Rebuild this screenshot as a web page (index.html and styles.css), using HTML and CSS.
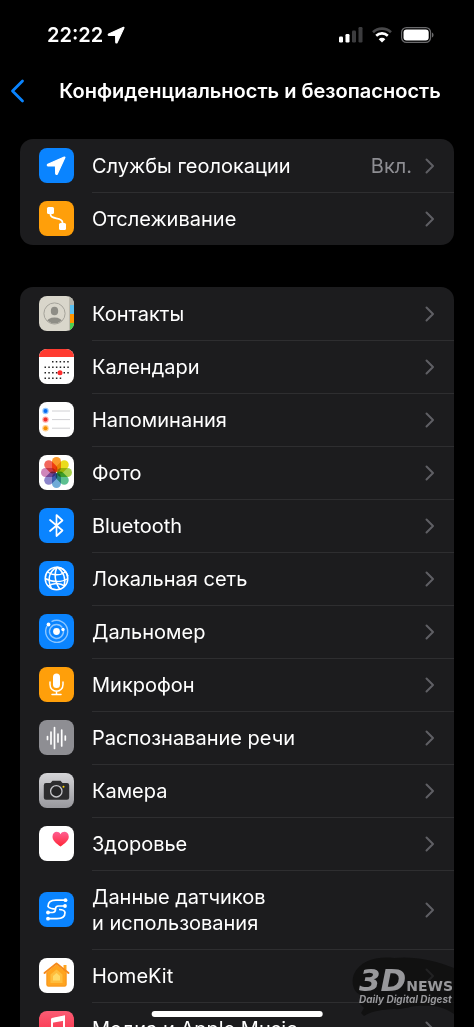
FILE: index.html
```
<!DOCTYPE html>
<html lang="ru">
<head>
  <meta charset="UTF-8" />
  <meta name="viewport" content="width=device-width, initial-scale=1.0" />
  <title>Конфиденциальность и безопасность</title>
  <link rel="stylesheet" href="styles.css">
</head>
<body>
  <svg class="sprite" aria-hidden="true">
    <symbol id="chevron" viewBox="0 0 10 16">
      <path d="M1.500 1.500 8 8l-6.500 6.500" fill="none" stroke="currentColor" stroke-width="2" stroke-linecap="round" stroke-linejoin="round"/>
    </symbol>
    <symbol id="arrow" viewBox="0 0 20 20">
      <path d="M18.300 1.500 1.800 8.800c-.8.500-.6 1.700.4 1.700h7.300l.2 7.600c0 1 1.200 1.200 1.600.3L18.900 2.100c.1-.4-.2-.7-.6-.6z" fill="#fff" stroke="#fff" stroke-width="1.200" stroke-linejoin="round"/>
    </symbol>
  </svg>

  <header class="status-bar">
    <div class="status-left">
      <span>22:22</span>
      <svg class="status-arrow"><use href="#arrow"/></svg>
    </div>
    <div class="status-right">
      <svg width="24" height="16" viewBox="0 0 24 16">
        <rect x="0" y="9.500" width="4" height="6" rx="1.200" fill="#fff"/>
        <rect x="6.500" y="7" width="4" height="8.500" rx="1.200" fill="#fff"/>
        <rect x="13" y="3.500" width="4" height="12" rx="1.200" fill="#3c3c3e"/>
        <rect x="19.500" y="0" width="4" height="15.500" rx="1.200" fill="#3c3c3e"/>
      </svg>
      <svg width="20" height="16" viewBox="0 0 20 16" fill="none" stroke-width="2.600">
        <path d="M1 5.200a13 13 0 0 1 18 0" stroke="#48484a"/>
        <path d="M4.200 8.700a8.400 8.400 0 0 1 11.600 0" stroke="#fff"/>
        <path d="M10 15.500 6.700 12.200a4.700 4.700 0 0 1 6.600 0z" fill="#fff"/>
      </svg>
      <svg width="33" height="16" viewBox="0 0 33 16">
        <rect x=".6" y=".6" width="29" height="14.800" rx="4.800" fill="none" stroke="#6a6a6c" stroke-width="1.200"/>
        <rect x="2.500" y="2.500" width="25.200" height="11" rx="3" fill="#fff"/>
        <path d="M31 5.500c2 .8 2 4.200 0 5z" fill="#6a6a6c"/>
      </svg>
    </div>
  </header>

  <nav class="nav-bar">
    <button class="back-btn" type="button" aria-label="Назад">
      <svg width="15" height="24" viewBox="0 0 15 24"><path d="M12.500 2 2.500 12l10 10" fill="none" stroke="#0a84ff" stroke-width="2.800" stroke-linecap="round" stroke-linejoin="round"/></svg>
    </button>
    <h1>Конфиденциальность и безопасность</h1>
  </nav>

  <main>
    <section class="group">
      <a class="row" href="#location">
        <span class="icon blue"><svg viewBox="0 0 35 35"><use href="#arrow" x="7" y="7.500" width="20" height="20"/></svg></span>
        <span class="row-body"><span class="label">Службы геолокации</span><span class="value">Вкл.</span><svg class="chevron"><use href="#chevron"/></svg></span>
      </a>
      <a class="row" href="#tracking">
        <span class="icon orange">
          <svg viewBox="0 0 35 35">
            <rect x="8" y="6" width="7" height="7" rx="1.500" fill="#fff"/>
            <rect x="20" y="22" width="7" height="7" rx="1.500" fill="#fff"/>
            <path d="M11.500 12v1.500c0 5.500 12 2 12 8V23" fill="none" stroke="#fff" stroke-width="1.800"/>
          </svg>
        </span>
        <span class="row-body"><span class="label">Отслеживание</span><svg class="chevron"><use href="#chevron"/></svg></span>
      </a>
    </section>

    <section class="group">
      <a class="row" href="#contacts">
        <span class="icon contacts">
          <svg viewBox="0 0 35 35">
            <path d="M31 0h4v9h-4z" fill="#b5b4ab"/>
            <path d="M31 9h4v9h-4z" fill="#5ac0f2"/>
            <path d="M31 18h4v9h-4z" fill="#ff9500"/>
            <path d="M31 27h4v8h-4z" fill="#4cd04f"/>
            <path d="M30.500 0v35" stroke="#bcb9ae"/>
            <clipPath id="person"><circle cx="15.500" cy="17.500" r="10"/></clipPath>
            <circle cx="15.500" cy="17.500" r="10.600" fill="none" stroke="#a5a39b"/>
            <g clip-path="url(#person)" fill="#8e8d86"><ellipse cx="15.500" cy="15" rx="3.700" ry="4.300"/><ellipse cx="15.500" cy="26.500" rx="8" ry="5"/></g>
          </svg>
        </span>
        <span class="row-body"><span class="label">Контакты</span><svg class="chevron"><use href="#chevron"/></svg></span>
      </a>
      <a class="row" href="#calendars">
        <span class="icon white">
          <svg viewBox="0 0 35 35">
            <path d="M0 0h35v8H0z" fill="#ff3b30"/>
            <g stroke="#222" stroke-width="1.600" stroke-dasharray="1.500 2.300">
              <path d="M13 12.700h17"/><path d="M5.500 18.300h24.500"/><path d="M5.500 23.700h24.500"/><path d="M5.500 29.300h17"/>
            </g>
            <circle cx="21" cy="23.700" r="2.500" fill="#ff2d2d"/>
          </svg>
        </span>
        <span class="row-body"><span class="label">Календари</span><svg class="chevron"><use href="#chevron"/></svg></span>
      </a>
      <a class="row" href="#reminders">
        <span class="icon white">
          <svg viewBox="0 0 35 35">
            <path d="M13 9h18M13 17.600h18M13 26.200h18" stroke="#d0d0d3"/>
            <g fill-opacity=".45"><circle cx="6.500" cy="9" r="3.200" fill="#0a84ff"/><circle cx="6.500" cy="17.600" r="3.200" fill="#ff3b30"/><circle cx="6.500" cy="26.200" r="3.200" fill="#ff9500"/></g>
            <circle cx="6.500" cy="9" r="2" fill="#0a6cf0"/><circle cx="6.500" cy="17.600" r="2" fill="#f0302a"/><circle cx="6.500" cy="26.200" r="2" fill="#f59000"/>
          </svg>
        </span>
        <span class="row-body"><span class="label">Напоминания</span><svg class="chevron"><use href="#chevron"/></svg></span>
      </a>
      <a class="row" href="#photos">
        <span class="icon white">
          <svg viewBox="0 0 35 35">
            <g class="petals">
              <rect x="13" y="2" width="9" height="15" rx="4.500" fill="#fb9a2c"/>
              <rect x="13" y="2" width="9" height="15" rx="4.500" fill="#ebdc1c" transform="rotate(45 17.500 17.500)"/>
              <rect x="13" y="2" width="9" height="15" rx="4.500" fill="#a8d04e" transform="rotate(90 17.500 17.500)"/>
              <rect x="13" y="2" width="9" height="15" rx="4.500" fill="#5cc090" transform="rotate(135 17.500 17.500)"/>
              <rect x="13" y="2" width="9" height="15" rx="4.500" fill="#70acd8" transform="rotate(180 17.500 17.500)"/>
              <rect x="13" y="2" width="9" height="15" rx="4.500" fill="#8c86cb" transform="rotate(225 17.500 17.500)"/>
              <rect x="13" y="2" width="9" height="15" rx="4.500" fill="#cf86ba" transform="rotate(270 17.500 17.500)"/>
              <rect x="13" y="2" width="9" height="15" rx="4.500" fill="#f2665c" transform="rotate(315 17.500 17.500)"/>
            </g>
          </svg>
        </span>
        <span class="row-body"><span class="label">Фото</span><svg class="chevron"><use href="#chevron"/></svg></span>
      </a>
      <a class="row" href="#bluetooth">
        <span class="icon blue">
          <svg viewBox="0 0 35 35"><path d="m11 12 12.500 10.500-6 5.500V7l6 5.500L11 23" fill="none" stroke="#fff" stroke-width="1.700" stroke-linejoin="round" stroke-linecap="round"/></svg>
        </span>
        <span class="row-body"><span class="label">Bluetooth</span><svg class="chevron"><use href="#chevron"/></svg></span>
      </a>
      <a class="row" href="#network">
        <span class="icon blue">
          <svg viewBox="0 0 35 35" fill="none" stroke="#fff" stroke-width="1.500">
            <circle cx="17.500" cy="17.500" r="11.300"/>
            <path d="M18 6.200C10 10 8 19 12.500 27.500M18 6.200c-3 6-2.500 15 3 22M18 6.200c6 4 9 11 7 19.500M18 6.200c5 0 9 4 11 9"/>
            <path d="M8.500 11c5 3.500 12 4 18 0M6.200 17.500c7 4 17 4 22.600 0M9 25.200c5-3.700 12-3.700 17 0"/>
          </svg>
        </span>
        <span class="row-body"><span class="label">Локальная сеть</span><svg class="chevron"><use href="#chevron"/></svg></span>
      </a>
      <a class="row" href="#nearby">
        <span class="icon blue">
          <svg viewBox="0 0 35 35">
            <g fill="none" stroke="#8cc6ff" stroke-width="1.400">
              <path d="M12.500 7.700a11 11 0 1 1-4.500 4.500"/>
              <path d="M23.300 13.500a7 7 0 1 0 1.100 2.700"/>
            </g>
            <circle cx="17.500" cy="17.500" r="3.400" fill="#fff"/>
            <circle cx="9.500" cy="10.500" r="1.900" fill="#fff"/>
            <circle cx="24" cy="15.500" r="1.700" fill="#fff"/>
          </svg>
        </span>
        <span class="row-body"><span class="label">Дальномер</span><svg class="chevron"><use href="#chevron"/></svg></span>
      </a>
      <a class="row" href="#microphone">
        <span class="icon orange">
          <svg viewBox="0 0 35 35">
            <rect x="14" y="6.500" width="7" height="14.500" rx="3.500" fill="#fff"/>
            <path d="M11 15v2.500c0 9 13 9 13 0V15M17.500 24v3.500M13 27.500h9" fill="none" stroke="#fff" stroke-width="1.500" stroke-linecap="round"/>
          </svg>
        </span>
        <span class="row-body"><span class="label">Микрофон</span><svg class="chevron"><use href="#chevron"/></svg></span>
      </a>
      <a class="row" href="#speech">
        <span class="icon gray">
          <svg viewBox="0 0 35 35"><path d="M8.500 16.500v3M12 12v12M15.500 7.500v21M19 14v8M22.700 10v16M26.300 16v4" fill="none" stroke="#fff" stroke-width="1.700" stroke-linecap="round"/></svg>
        </span>
        <span class="row-body"><span class="label">Распознавание речи</span><svg class="chevron"><use href="#chevron"/></svg></span>
      </a>
      <a class="row" href="#camera">
        <span class="icon camera">
          <svg viewBox="0 0 35 35">
            <path d="M7 10h4.500l2-2.300h8l2 2.300H28a2.200 2.200 0 0 1 2.200 2.200v12.300a2.200 2.200 0 0 1-2.200 2.200H7a2.200 2.200 0 0 1-2.200-2.200V12.200A2.200 2.200 0 0 1 7 10z" fill="#2c2c2e"/>
            <circle cx="17.300" cy="18.300" r="5.700" fill="#242426" stroke="#c4c4c8" stroke-width="1.300"/>
            <circle cx="24.500" cy="13.700" r="1" fill="#ffd60a"/>
          </svg>
        </span>
        <span class="row-body"><span class="label">Камера</span><svg class="chevron"><use href="#chevron"/></svg></span>
      </a>
      <a class="row" href="#health">
        <span class="icon white">
          <svg viewBox="0 0 35 35">
            <linearGradient id="heart" x2="0" y2="1"><stop stop-color="#ff5f93"/><stop offset="1" stop-color="#ff2636"/></linearGradient>
            <path d="M21.500 20.500c-4-3-8-5.800-8-9.800 0-5.500 6-6.500 8-2.500 2-4 8.300-3 8.300 2.500 0 4-4.300 6.800-8.300 9.800z" fill="url(#heart)"/>
          </svg>
        </span>
        <span class="row-body"><span class="label">Здоровье</span><svg class="chevron"><use href="#chevron"/></svg></span>
      </a>
      <a class="row" href="#sensors">
        <span class="icon blue">
          <svg viewBox="0 0 35 35">
            <g fill="none" stroke="#fff" stroke-width="1.700">
              <path d="M26.500 8.200H17c-5 0-8 1.800-8 6.300 2 2.500 4.500 2.500 8 2.500"/>
              <path d="M26 14h-6.500c-2.500 0-3 1-3 3s-1 3.500-3 3.500H9"/>
              <path d="M9 26.700h9c5 0 8-2 8-6.200-.5-2.500-3-3-6-3"/>
            </g>
            <g fill="#fff"><circle cx="26.500" cy="8.200" r="1.900"/><circle cx="26" cy="14" r="1.900"/><circle cx="9" cy="20.500" r="1.900"/><circle cx="9" cy="26.700" r="1.900"/></g>
          </svg>
        </span>
        <span class="row-body"><span class="label">Данные датчиков<br>и использования</span><svg class="chevron"><use href="#chevron"/></svg></span>
      </a>
      <a class="row" href="#homekit">
        <span class="icon white">
          <svg viewBox="0 0 35 35">
            <path d="M17.500 6.500 7.500 14.500v12.500q0 1.500 1.500 1.500h17q1.500 0 1.500-1.500V7h-3v5z" fill="#ffa51f"/>
            <path d="m5.500 15 12-9.500 12 9.500" fill="none" stroke="#f58a1c" stroke-width="2" stroke-linejoin="round" stroke-linecap="round"/>
            <path d="M8 15v11.500q0 1.500 1.500 1.500h16q1.500 0 1.500-1.500V15" fill="none" stroke="#f7941f"/>
            <path d="m17.500 11.500-6 5v8.500h12v-8.500z" fill="#ffbd3c"/>
            <path d="m17.500 15-3.500 3v4.500h7V18z" fill="#ffda68"/>
          </svg>
        </span>
        <span class="row-body"><span class="label">HomeKit</span><svg class="chevron"><use href="#chevron"/></svg></span>
      </a>
      <a class="row" href="#media">
        <span class="icon music">
          <svg viewBox="0 0 35 35">
            <path d="M13 8 25 5.500V23M13 8v17" fill="none" stroke="#fff" stroke-width="2"/>
            <path d="M12 7.500 26 5v4.500L12 12z" fill="#fff"/>
            <ellipse cx="10.500" cy="26" rx="3.500" ry="2.800" fill="#fff"/><ellipse cx="22.500" cy="23.500" rx="3.500" ry="2.800" fill="#fff"/>
          </svg>
        </span>
        <span class="row-body"><span class="label">Медиа и Apple Music</span><svg class="chevron"><use href="#chevron"/></svg></span>
      </a>
    </section>
  </main>

  <div class="watermark">
    <svg class="brush" viewBox="0 0 102 66" preserveAspectRatio="none">
      <path d="M2 21C8 8 24 3 42 5c19-2 40 2 60 10v46C92 54 82 52 71 53c-11-1-18 4-29 3-12 1-20 1-30 7l-3-3 3-5-4-4 3-8C3 41-2 32 2 21z" fill="#0d0d0e" fill-opacity=".75"/>
    </svg>
    <div class="brand"><span class="brand-3d">3D</span><span class="brand-news">NEWS</span></div>
    <div class="tagline">Daily Digital Digest</div>
  </div>
  <div class="home-indicator"></div>
</body>
</html>
```
FILE: styles.css
```
* {
  margin: 0;
  padding: 0;
  box-sizing: border-box;
}

body {
  height: 100vh;
  overflow: hidden;
  background: #000;
  color: #fff;
  font-family: 'Inter', 'Roboto', 'Liberation Sans', sans-serif;
  font-size: 20px;
}

svg {
  display: block;
  flex-shrink: 0;
}

.sprite {
  position: absolute;
  width: 0;
  height: 0;
}

.status-bar {
  display: flex;
  justify-content: space-between;
  align-items: center;
  height: 70px;
  padding: 0 40px 0 47px;
}

.status-left {
  display: flex;
  align-items: center;
  gap: 4px;
  font-size: 20px;
  font-weight: 600;
}

.status-arrow {
  width: 18px;
  height: 18px;
}

.status-right {
  display: flex;
  align-items: center;
  gap: 9px;
}

.nav-bar {
  display: flex;
  align-items: center;
  height: 42px;
  padding: 0 28px 0 10px;
}

.back-btn {
  width: 44px;
  height: 42px;
  display: flex;
  align-items: center;
  background: none;
  border: none;
  cursor: pointer;
}

h1 {
  flex: 1;
  text-align: center;
  white-space: nowrap;
  font-size: 20px;
  font-weight: 600;
}

main {
  display: flex;
  flex-direction: column;
  gap: 42px;
  padding: 27px 20px 0;
}

.group {
  background: #1c1c1e;
  border-radius: 13px;
  overflow: hidden;
}

.row {
  display: flex;
  align-items: center;
  gap: 18px;
  padding-left: 19px;
  color: inherit;
  text-decoration: none;
}

.row-body {
  flex: 1;
  display: flex;
  align-items: center;
  gap: 13px;
  min-height: 53px;
  padding: 13px 19px 13px 0;
  border-top: 1px solid #2e2e30;
}

.row:first-child .row-body {
  border-top-color: transparent;
}

.label {
  flex: 1;
  line-height: 26px;
}

.value {
  color: #8e8e93;
}

.chevron {
  width: 10px;
  height: 16px;
  color: #5f5f64;
}

.icon {
  width: 35px;
  height: 35px;
  border-radius: 8px;
  overflow: hidden;
  flex-shrink: 0;
}

.blue {
  background: #0a84ff;
}

.orange {
  background: #ff9f0a;
}

.gray {
  background: #8e8e93;
}

.white {
  background: #fff;
}

.contacts {
  background: #d9d6cb;
}

.camera {
  background: linear-gradient(#d5d5d8, #98989d);
}

.music {
  background: linear-gradient(#fb5c74, #fa233b);
}

.petals {
  isolation: isolate;
}

.petals rect {
  mix-blend-mode: multiply;
}

/* overlays */
.watermark {
  position: fixed;
  right: 18px;
  bottom: 8px;
  width: 104px;
  height: 66px;
  padding: 15px 0 0 7px;
  color: #98989b;
}

.brush {
  position: absolute;
  top: 0;
  left: 0;
  width: 102px;
  height: 66px;
}

.brand {
  position: relative;
  display: flex;
  align-items: baseline;
  height: 25px;
}

.brand-3d {
  font: italic 700 31px/24px 'DejaVu Sans', sans-serif;
}

.brand-news {
  font: 700 14px/24px 'DejaVu Sans', sans-serif;
}

.tagline {
  position: relative;
  white-space: nowrap;
  font: italic 700 10px/12px 'Inter', sans-serif;
}

.home-indicator {
  position: fixed;
  left: 50%;
  bottom: 10px;
  width: 36%;
  height: 6px;
  border-radius: 3px;
  background: #fff;
  transform: translateX(-50%);
}
```
